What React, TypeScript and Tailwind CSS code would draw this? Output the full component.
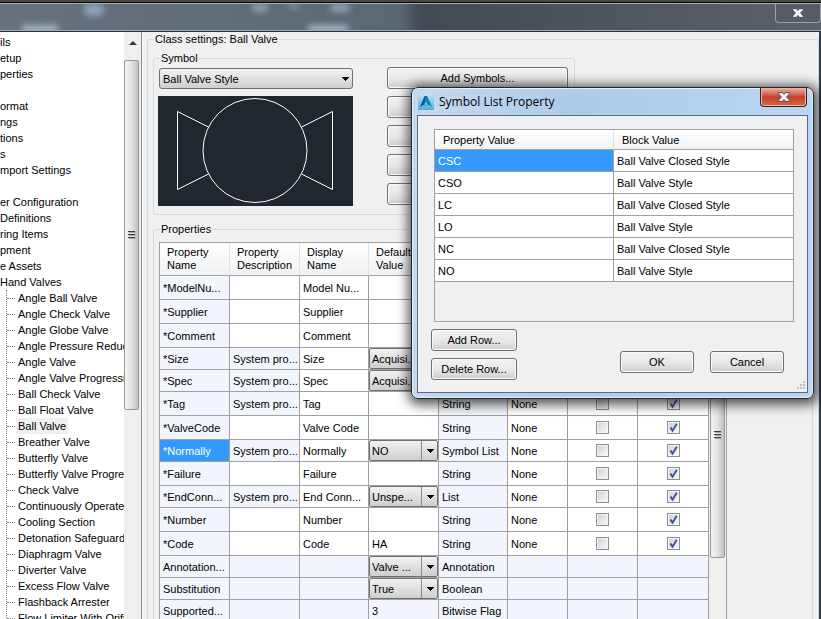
import React from "react";

const UI = "font-['Liberation_Sans',Arial,sans-serif] text-[11px] leading-4 text-black";

const BUTTON =
  "h-[22px] shrink-0 rounded-[3px] border border-[#707070] bg-linear-to-b from-[#f2f2f2] from-0% via-[#e9e9e9] via-50% to-[#cfcfcf] px-2 text-center shadow-[inset_0_0_0_1px_#fbfbfb]";

const treeTop = ["ils", "etup", "perties", "", "ormat", "ngs", "tions", "s", "mport Settings", "", "er Configuration", "Definitions", "ring Items", "pment", "e Assets", "Hand Valves"];

const treeLeaves = [
  "Angle Ball Valve", "Angle Check Valve", "Angle Globe Valve", "Angle Pressure Reduc", "Angle Valve",
  "Angle Valve Progressiv", "Ball Check Valve", "Ball Float Valve", "Ball Valve", "Breather Valve",
  "Butterfly Valve", "Butterfly Valve Progres", "Check Valve", "Continuously Operated", "Cooling Section",
  "Detonation Safeguard", "Diaphragm Valve", "Diverter Valve", "Excess Flow Valve", "Flashback Arrester",
  "Flow Limiter With Orific",
];

type Row = {
  name: string;
  desc?: string;
  display?: string;
  value?: string;
  kind?: "select" | "button";
  type: string;
  acq?: string;
  system?: boolean;
};

const rows: Row[] = [
  { name: "*ModelNu...", display: "Model Nu...", type: "String", acq: "None" },
  { name: "*Supplier", display: "Supplier", type: "String", acq: "None" },
  { name: "*Comment", display: "Comment", type: "String", acq: "None" },
  { name: "*Size", desc: "System pro...", display: "Size", value: "Acquisi...", kind: "button", type: "String", acq: "None" },
  { name: "*Spec", desc: "System pro...", display: "Spec", value: "Acquisi...", kind: "button", type: "String", acq: "None" },
  { name: "*Tag", desc: "System pro...", display: "Tag", type: "String", acq: "None" },
  { name: "*ValveCode", display: "Valve Code", type: "String", acq: "None" },
  { name: "*Normally", desc: "System pro...", display: "Normally", value: "NO", kind: "select", type: "Symbol List", acq: "None" },
  { name: "*Failure", display: "Failure", type: "String", acq: "None" },
  { name: "*EndConn...", desc: "System pro...", display: "End Conn...", value: "Unspe...", kind: "select", type: "List", acq: "None" },
  { name: "*Number", display: "Number", type: "String", acq: "None" },
  { name: "*Code", display: "Code", value: "HA", type: "String", acq: "None" },
  { name: "Annotation...", value: "Valve ...", kind: "select", type: "Annotation", system: true },
  { name: "Substitution", value: "True", kind: "select", type: "Boolean", system: true },
  { name: "Supported...", value: "3", type: "Bitwise Flag", system: true },
];

const symbols = [
  ["CSC", "Ball Valve Closed Style"],
  ["CSO", "Ball Valve Style"],
  ["LC", "Ball Valve Closed Style"],
  ["LO", "Ball Valve Style"],
  ["NC", "Ball Valve Closed Style"],
  ["NO", "Ball Valve Style"],
];

function Caret() {
  return (
    <svg viewBox="0 0 8 4" className="pointer-events-none h-1 w-2" aria-hidden="true" shapeRendering="crispEdges">
      <path d="M0 0h8L4 4z" fill="#000" />
    </svg>
  );
}

function CloseGlyph() {
  return (
    <svg viewBox="0 0 12 10" className="h-[10px] w-3" aria-hidden="true">
      <path d="M.6.600H4.400L6 2.400L7.600.600H11.400V2L8.600 5L11.400 8V9.400H7.600L6 7.600L4.400 9.400H.600V8L3.400 5L.600 2z" fill="#f4f4f4" stroke="#464b58" strokeWidth="1" />
    </svg>
  );
}

function Thumb({ className }: { className: string }) {
  return (
    <div className={`flex w-[15px] items-center justify-center rounded-[2px] border border-[#979797] bg-linear-to-r from-[#f4f4f4] via-[#e3e3e5] to-[#c0c0c4] ${className}`}>
      <svg viewBox="0 0 8 8" className="size-2" aria-hidden="true" shapeRendering="crispEdges">
        <path d="M0 0h7v1H0zM0 3h7v1H0zM0 6h7v1H0z" fill="#3c3c3c" />
        <path d="M1 1h7v1H1zM1 4h7v1H1zM1 7h7v1H1z" fill="#a8a8a8" />
      </svg>
    </div>
  );
}

function Check({ label, checked }: { label: string; checked?: boolean }) {
  return (
    <span className="relative mx-auto block size-[13px]">
      <input
        type="checkbox"
        aria-label={label}
        defaultChecked={checked}
        className="peer block size-[13px] appearance-none border border-[#8e8f8f] bg-linear-to-br from-[#cdd0d5] to-[#fafafa] shadow-[inset_0_0_0_1px_#f4f4f4]"
      />
      <svg viewBox="0 0 13 13" className="pointer-events-none absolute inset-0 hidden size-[13px] peer-checked:block" aria-hidden="true">
        <path d="M3.500 6.500L5.500 9.800L9.800 2.800" fill="none" stroke="#3c539b" strokeWidth="1.900" />
      </svg>
    </span>
  );
}

function PropertyTable() {
  const cell = "border-r border-b border-[#a0a0a0] p-0 pl-[3px] text-left font-normal whitespace-nowrap overflow-hidden";
  const head = "border-r border-b border-r-[#e2e3e6] border-b-[#a0a0a0] bg-linear-to-b from-white to-[#f1f2f4] p-0 pl-[7px] text-left align-middle leading-[13px] font-normal";
  return (
    <table className="w-[549px] table-fixed border-separate border-spacing-0">
      <colgroup>
        <col className="w-[70px]" />
        <col className="w-[70px]" />
        <col className="w-[69px]" />
        <col className="w-[70px]" />
        <col className="w-[69px]" />
        <col className="w-[60px]" />
        <col className="w-[70px]" />
        <col className="w-[71px]" />
      </colgroup>
      <thead>
        <tr className="h-[33px]">
          {["Property Name", "Property Description", "Display Name", "Default Value", "Type", "Acquisition", "Read Only", "Visible"].map((h) => (
            <th key={h} scope="col" className={head}>{h}</th>
          ))}
        </tr>
      </thead>
      <tbody>
        {rows.map((r) => {
          const tall = !r.kind && r.name !== "Supported...";
          const tint = r.system ? "bg-[#f2f6fc]" : "bg-white";
          return (
            <tr key={r.name} className={tall ? "h-6" : "h-[22px]"}>
              <td className={`${cell} ${r.name === "*Normally" ? "bg-[#3399ff] text-white" : "bg-[#f2f6fc]"}`}>{r.name}</td>
              <td className={`${cell} ${r.system || r.desc ? "bg-[#f2f6fc]" : "bg-white"}`}>{r.desc}</td>
              <td className={`${cell} ${tint}`}>{r.display}</td>
              {r.kind ? (
                <td className="border-r border-b border-[#a0a0a0] bg-white p-0">
                  {r.kind === "select" ? (
                    <span className="relative block h-[21px]">
                      <select aria-label={r.name} className="block h-[21px] w-full appearance-none rounded-[2px] border border-[#707070] bg-linear-to-b from-[#f2f2f2] to-[#cfcfcf] pl-[2px]">
                        <option>{r.value}</option>
                      </select>
                      <span className="pointer-events-none absolute inset-y-px right-px flex w-4 items-center justify-center border-l border-[#8a8a8a]">
                        <Caret />
                      </span>
                    </span>
                  ) : (
                    <button type="button" className="block h-[21px] w-full rounded-[2px] border border-[#707070] bg-linear-to-b from-[#f2f2f2] to-[#cfcfcf] pl-[2px] text-left">{r.value}</button>
                  )}
                </td>
              ) : (
                <td className={`${cell} ${tint}`}>{r.value}</td>
              )}
              <td className={`${cell} bg-[#f2f6fc]`}>{r.type}</td>
              <td className={`${cell} ${tint}`}>{r.acq}</td>
              <td className={`border-r border-b border-[#a0a0a0] p-0 ${tint}`}>{!r.system && <Check label={`${r.name} read only`} />}</td>
              <td className={`border-r border-b border-[#a0a0a0] p-0 ${tint}`}>{!r.system && <Check label={`${r.name} visible`} checked />}</td>
            </tr>
          );
        })}
      </tbody>
    </table>
  );
}

function Tree() {
  return (
    <aside className="flex w-[142px] shrink-0 border-r border-[#828790] bg-white">
      <ul className="min-w-0 flex-1 overflow-hidden pt-[2px] whitespace-nowrap">
        {treeTop.map((t, i) => (
          <li key={i} className="h-4">{t}</li>
        ))}
        <li>
          <ul className="ml-[6px] border-l border-dotted border-[#808080]">
            {treeLeaves.map((t) => (
              <li key={t} className="flex h-4 items-center">
                <span className="w-2 shrink-0 border-t border-dotted border-[#808080]" />
                <span className={`ml-px px-[2px] ${t === "Ball Valve" ? "bg-[#f0f0f0]" : ""}`}>{t}</span>
              </li>
            ))}
          </ul>
        </li>
      </ul>
      <div className="flex w-[17px] shrink-0 flex-col bg-[#f0f0f0]">
        <div className="flex h-[28px] items-center justify-center pb-[6px]">
          <svg viewBox="0 0 8 4" className="h-1 w-2" aria-hidden="true"><path d="M0 4h8L4 0z" fill="#333" /></svg>
        </div>
        <Thumb className="h-[350px]" />
      </div>
    </aside>
  );
}

function ValvePreview() {
  return (
    <svg viewBox="0 0 195 110" className="mt-[7px] -ml-px h-[110px] w-[195px] bg-[#20272f]" role="img" aria-label="Ball valve preview">
      <g fill="none" stroke="#fff" strokeWidth="1">
        <circle cx="97" cy="54.500" r="52" />
        <path d="M50.500 31L19.500 15.500V93.500L50.500 78" />
        <path d="M143.500 31L174.500 15.500V93.500L143.500 78" />
      </g>
    </svg>
  );
}

function AppIcon() {
  return (
    <svg viewBox="0 0 16 16" className="mt-[6px] ml-px size-4" aria-hidden="true">
      <defs>
        <linearGradient id="tile" x1="0" y1="0" x2="0" y2="1">
          <stop offset="0" stopColor="#c4e2f3" />
          <stop offset="1" stopColor="#4fb0de" />
        </linearGradient>
      </defs>
      <rect width="16" height="16" fill="url(#tile)" />
      <path d="M6.800 2H9.200L14 12.800L10 10.800L8 12L6 10.800L2 12.800z" fill="#0d83c4" />
      <path d="M6.800 2H8L6 10.800L2 12.800z" fill="#075f99" />
      <path d="M8 7.600L9.400 10.500L8 11.400L6.600 10.500z" fill="#8fd0ee" />
    </svg>
  );
}

function Dialog() {
  return (
    <div
      role="dialog"
      aria-label="Symbol List Property"
      className="absolute top-[87px] left-[411px] flex h-[312px] w-[403px] flex-col rounded-[7px] border border-[#1c2530] bg-linear-to-r from-[#c6daee] from-0% via-[#aecbea] via-40% to-[#b9d6f5] px-[5px] pb-[5px] shadow-[inset_0_0_0_1px_#e4f0fb,1px_2px_12px_4px_rgba(0,0,0,0.65)]"
    >
      <header className="flex h-[27px] shrink-0 items-start">
        <AppIcon />
        <h2 className="mt-[6px] ml-[5px] font-['Open_Sans','Noto_Sans',sans-serif] text-xs leading-4">Symbol List Property</h2>
        <button type="button" aria-label="Close dialog" className="mr-px ml-auto flex h-[19px] w-[47px] items-center justify-center rounded-b-[4px] border border-t-0 border-[#4d1b17] bg-linear-to-b from-[#e8b0a4] from-0% via-[#c8402a] via-50% to-[#d4684a] shadow-[inset_0_0_0_1px_#e9b5aa]">
          <CloseGlyph />
        </button>
      </header>
      <div className="relative flex min-h-0 flex-1 flex-col border border-[#5b6b7c] bg-[#f0f0f0] px-[13px] pt-[13px]">
        <div className="ml-[3px] h-[193px] border border-[#a0a0a0]">
          <table className="w-full table-fixed border-separate border-spacing-0">
            <colgroup><col className="w-1/2" /><col className="w-1/2" /></colgroup>
            <thead>
              <tr className="h-5">
                <th scope="col" className="border-r border-b border-r-[#e2e3e6] border-b-[#a0a0a0] bg-linear-to-b from-white to-[#f1f2f4] p-0 pl-2 text-left font-normal">Property Value</th>
                <th scope="col" className="border-b border-[#a0a0a0] bg-linear-to-b from-white to-[#f1f2f4] p-0 pl-2 text-left font-normal">Block Value</th>
              </tr>
            </thead>
            <tbody>
              {symbols.map(([k, v], i) => (
                <tr key={k} className="h-[22px]">
                  <td className={`border-r border-b border-[#a0a0a0] p-0 pl-[3px] ${i === 0 ? "bg-[#3399ff] text-white" : "bg-white"}`}>{k}</td>
                  <td className="border-b border-[#a0a0a0] bg-white p-0 pl-[3px]">{v}</td>
                </tr>
              ))}
            </tbody>
          </table>
        </div>
        <div className="mt-[7px] flex items-center justify-between pr-[10px]">
          <div className="flex w-[86px] flex-col gap-[7px]">
            <button type="button" className={BUTTON}>Add Row...</button>
            <button type="button" className={BUTTON}>Delete Row...</button>
          </div>
          <div className="flex gap-4 pt-[14px]">
            <button type="button" className={`${BUTTON} w-[74px]`}>OK</button>
            <button type="button" className={`${BUTTON} w-[74px]`}>Cancel</button>
          </div>
        </div>
        <svg viewBox="0 0 10 10" className="absolute right-px bottom-px size-[10px]" aria-hidden="true" shapeRendering="crispEdges">
          <path d="M7 0h2v2H7zM4 3h2v2H4zM7 3h2v2H7zM1 6h2v2H1zM4 6h2v2H4zM7 6h2v2H7z" fill="#c0c0c0" />
        </svg>
      </div>
    </div>
  );
}

export default function App() {
  return (
    <div className={`relative flex h-screen flex-col overflow-hidden bg-[#f0f0f0] ${UI}`}>
      <div className="h-[3px] shrink-0 border-b border-black bg-[#4a4843]" />
      <header className="relative flex h-[29px] shrink-0 items-start justify-end overflow-hidden border-t border-b border-t-[#aab2ba] border-b-[#2a3038] bg-linear-to-r from-[#667380] from-0% via-[#414a55] via-52% to-[#5c626b] shadow-[inset_0_-1px_0_#a0a8b0]">
        <div className="pointer-events-none absolute inset-x-0 top-0 h-[26px] overflow-hidden" aria-hidden="true">
          <span className="absolute top-0 left-0 h-[26px] w-[420px] bg-linear-to-r from-[#66727e] from-0% via-[#5a6875] via-95% to-transparent" />
          <span className="absolute top-0 left-[84px] h-3 w-5 rounded-full bg-[#8fa6bd] blur-[3px]" />
          <span className="absolute top-[21px] left-[22px] h-2 w-9 bg-[#9fb4c9] blur-[3px]" />
          <span className="absolute top-0 left-[252px] h-2 w-4 rounded-full bg-[#8ea2b6] blur-[3px]" />
          <span className="absolute top-0 left-[288px] h-1 w-3 rounded-full bg-[#8ea2b6] blur-[3px]" />
          <span className="absolute top-0 left-[330px] h-2 w-5 rounded-full bg-[#8ea2b6] blur-[3px]" />
          <span className="absolute top-[21px] left-[308px] h-2 w-10 bg-[#9fb4c9] blur-[3px]" />
        </div>
        <button type="button" aria-label="Close" className="relative flex h-[19px] w-[46px] items-center justify-center rounded-b-[4px] border border-t-0 border-[#9aa1a9] bg-[#555c66]">
          <CloseGlyph />
        </button>
      </header>
      <div className="flex min-h-0 flex-1 border-r-2 border-[#333a42]">
        <Tree />
        <main className="min-w-0 flex-1 overflow-hidden border-l border-white pl-1">
          <fieldset className="min-w-0 rounded-[3px] border border-b-0 border-[#d0dde4] px-[5px]">
            <legend className="ml-px px-px leading-[14px]">Class settings: Ball Valve</legend>
            <fieldset className="mt-1 h-[165px] w-[422px] rounded-[3px] border border-[#d0dde4] pr-[6px] pl-[5px]">
              <legend className="ml-px px-px">Symbol</legend>
              <div className="flex justify-between">
                <div className="pt-[2px]">
                  <span className="relative block">
                    <select aria-label="Symbol style" className="block h-[21px] w-[194px] appearance-none rounded-[3px] border border-[#707070] bg-linear-to-b from-[#f2f2f2] to-[#cfcfcf] pl-[3px]">
                      <option>Ball Valve Style</option>
                    </select>
                    <span className="pointer-events-none absolute inset-y-0 right-1 flex items-center"><Caret /></span>
                  </span>
                  <ValvePreview />
                </div>
                <div className="flex w-[181px] flex-col gap-[7px] pt-px">
                  <button type="button" className={BUTTON}>Add Symbols...</button>
                  <button type="button" aria-label="Edit block" className={BUTTON} />
                  <button type="button" aria-label="Edit annotation" className={BUTTON} />
                  <button type="button" aria-label="Edit join type" className={BUTTON} />
                  <button type="button" aria-label="Edit grips" className={BUTTON} />
                </div>
              </div>
            </fieldset>
            <fieldset className="mt-[6px] min-w-0 rounded-[3px] border border-b-0 border-[#d0dde4] pl-[5px]">
              <legend className="ml-px px-px">Properties</legend>
              <div className="mt-[5px] flex w-[568px] border border-[#a0a0a0]">
                <PropertyTable />
                <div className="flex w-[17px] shrink-0 flex-col items-center bg-[#f0f0f0] pt-[69px]">
                  <Thumb className="h-[246px]" />
                </div>
              </div>
            </fieldset>
          </fieldset>
        </main>
      </div>
      <Dialog />
    </div>
  );
}
